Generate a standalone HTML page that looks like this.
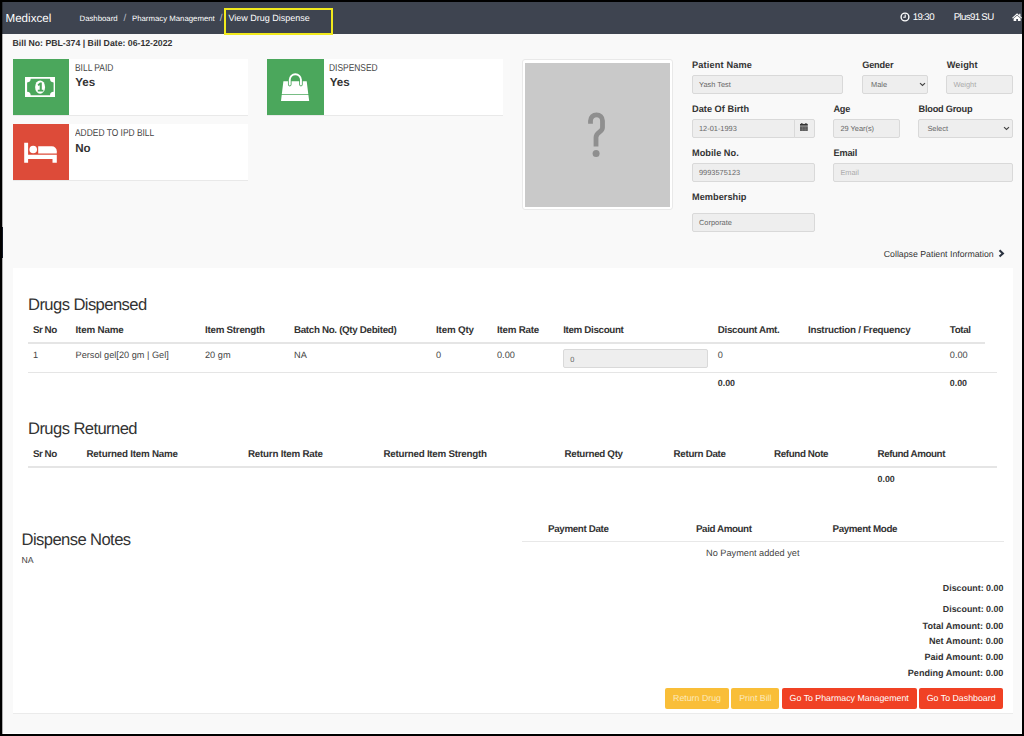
<!DOCTYPE html>
<html>
<head>
<meta charset="utf-8">
<title>View Drug Dispense</title>
<style>
*{box-sizing:border-box;margin:0;padding:0}
html,body{width:1024px;height:736px;overflow:hidden;background:#000}
body{font-family:"Liberation Sans",sans-serif;color:#333;position:relative;text-rendering:geometricPrecision}
.abs,.t,.b,.lbl,.inp,.th,.td{position:absolute;white-space:nowrap}
#page{position:absolute;left:0;top:0;width:1024px;height:736px;background:#f9f9f9;overflow:hidden}
#frame{position:absolute;left:0;top:0;width:1024px;height:736px;box-shadow:inset 0 0 0 2px #000;pointer-events:none;z-index:50}
#nav{position:absolute;left:0;top:0;width:1024px;height:33.800px;background:#3e4450}
#nav .t{color:#fff}
.card{position:absolute;height:56px;background:#fff;box-shadow:0 1px 0 #e9e9e9}
.card .ic{position:absolute;left:0;top:0;width:56px;height:56px}
.green{background:#4ba75c}.red{background:#dd4b39}
.card .ct{position:absolute;left:62.3px;top:4.300px;font-size:10px;line-height:12px;color:#444;transform:scaleX(.842);transform-origin:0 50%}
.card .cv{position:absolute;left:62.5px;top:17.500px;font-size:11.6px;font-weight:700;color:#333}
.lbl{font-weight:700;font-size:9.2px;transform:scaleY(1.03);transform-origin:0 50%;color:#333;line-height:12px}
.inp{height:18.5px;background:#eee;border:1px solid #d9d9d9;border-radius:2px;font-size:7.4px;color:#666;line-height:18px;padding-left:6px}
.ph{color:#aaa}
.panel{position:absolute;background:#fff}
.h{position:absolute;font-size:16.600px;letter-spacing:-.58px;color:#333;white-space:nowrap;line-height:20px}
.th{font-weight:700;font-size:9.8px;letter-spacing:-.3px;color:#333;line-height:12px}
.td{font-size:9.2px;color:#444;line-height:12px}
.b{font-weight:700;font-size:8.85px;color:#333;line-height:12px}
.hr{position:absolute;background:#e5e5e5}
.btn{position:absolute;top:687px;height:21px;border-radius:2px;color:#fff;font-size:8.8px;line-height:21px;text-align:center;white-space:nowrap}
</style>
</head>
<body>
<div id="page">
  <div id="nav">
    <div class="t" style="left:5.5px;top:12px;font-size:11.6px;line-height:14px">Medixcel</div>
    <div class="t" style="left:79.5px;top:13.700px;font-size:7.8px;line-height:10px">Dashboard</div>
    <div class="t" style="left:123.5px;top:12.500px;font-size:10px;line-height:12px;color:#b9bdc6">/</div>
    <div class="t" style="left:132px;top:13.700px;font-size:7.8px;line-height:10px">Pharmacy Management</div>
    <div class="t" style="left:219.800px;top:12.500px;font-size:10px;line-height:12px;color:#b9bdc6">/</div>
    <div class="t" style="left:228.5px;top:11.600px;font-size:9px;line-height:12px">View Drug Dispense</div>
    <svg class="abs" style="left:900.300px;top:12px" width="10" height="10" viewBox="0 0 10 10"><circle cx="5" cy="5" r="3.9" fill="none" stroke="#fff" stroke-width="1.4"/><path d="M5.2 2.6V5.3H3.2" fill="none" stroke="#fff" stroke-width="1.1"/></svg>
    <div class="t" style="left:912.700px;top:12px;font-size:9.700px;line-height:12px;letter-spacing:-.6px">19:30</div>
    <div class="t" style="left:953.8px;top:12px;font-size:9.700px;line-height:12px;letter-spacing:-.68px">Plus91 SU</div>
    <svg class="abs" style="left:1012.200px;top:12.900px" width="10.200" height="8.300" viewBox="0 0 12 9" preserveAspectRatio="none"><path d="M6 0.3L0.2 5.2l.7.8L6 1.8l5.1 4.2.7-.8L9.9 3.5V.9H8.5v1.5z M6 2.6L1.9 6v3h3.1V6.4h2V9h3.1V6z" fill="#fff"/></svg>
  </div>
  <div class="abs" style="left:224px;top:8px;width:108.5px;height:26.5px;border:2px solid #f2ea1d;z-index:5"></div>
  <div class="abs" style="left:2px;top:227px;width:1px;height:31px;background:#1b2333"></div>
  <div class="abs" style="left:12.5px;top:37.5px;font-size:8.72px;font-weight:700;line-height:11px;color:#333">Bill No: PBL-374 | Bill Date: 06-12-2022</div>
  <div class="card" style="left:12.7px;top:58.6px;width:235.5px">
    <div class="ic green"></div><div class="ct">BILL PAID</div><div class="cv">Yes</div>
  </div>
  <svg class="abs" style="left:25.2px;top:77.1px" width="30.3" height="20.2" viewBox="0 0 30.3 20.2">
    <rect width="30.3" height="20.2" fill="#fff"/>
    <path d="M5.700 1.800H25A3.600 3.600 0 0 0 28.600 5.400V14.700A3.600 3.600 0 0 0 25 18.300H5.700A3.600 3.600 0 0 0 2.100 14.700V5.400A3.600 3.600 0 0 0 5.700 1.800Z" fill="#4ba75c"/>
    <ellipse cx="15.1" cy="10.1" rx="5" ry="6.7" fill="#fff"/>
    <path d="M12.600 7.500l2.400-2h1.800v7.200h1.600v1.700h-5.600v-1.700h1.900V8.200l-1.200.9z" fill="#4ba75c"/>
  </svg>
  <div class="card" style="left:267.2px;top:58.6px;width:235.8px">
    <div class="ic green" style="width:56.500px"></div><div class="ct">DISPENSED</div><div class="cv">Yes</div>
  </div>
  <svg class="abs" style="left:280px;top:72px" width="30" height="30" viewBox="0 0 30 30">
    <path d="M3.4 9.3H26.7L28.3 22.2H1.8Z M1.7 22.95H28.4L29.2 29.1H1Z" fill="#fff"/>
    <path d="M9.75 12.6V7.85A5.6 5.6 0 0 1 20.95 7.85V12.6" fill="none" stroke="#4ba75c" stroke-width="3.6" stroke-linecap="round"/>
    <path d="M9.75 12.6V7.85A5.6 5.6 0 0 1 20.95 7.85V12.6" fill="none" stroke="#fff" stroke-width="1.9" stroke-linecap="round"/>
  </svg>
  <div class="card" style="left:12.7px;top:124.200px;width:235.5px">
    <div class="ic red"></div><div class="ct">ADDED TO IPD BILL</div><div class="cv">No</div>
  </div>
  <svg class="abs" style="left:24px;top:142px" width="33" height="21" viewBox="0 0 33 21">
    <path d="M.2.7h3.9v12h28.7v8h-4.3v-3.8H4.1v3.8H.2z" fill="#fff"/>
    <circle cx="9.2" cy="7.5" r="3.8" fill="#fff"/>
    <path d="M14.2 4.3H27.8A5 5 0 0 1 32.8 9.3V11.4H14.2Z" fill="#fff"/>
  </svg>
  <div class="abs" style="left:521.800px;top:59.3px;width:150.900px;height:151px;background:#fff;border:1px solid #e9e9e9;border-radius:3px"></div>
  <div class="abs" style="left:525.2px;top:62.5px;width:144.8px;height:144.8px;background:#c9c9c9"></div>
  <svg class="abs" style="left:586px;top:112px" width="22" height="48" viewBox="0 0 22 48">
    <path d="M4.5 11.800V8.800A6 6 0 0 1 16.500 8.800V15.500C16.500 20.500 10 19.500 10 25.500V34.400" fill="none" stroke="#8f8f8f" stroke-width="4.800"/>
    <circle cx="10.100" cy="41.500" r="3.500" fill="#8f8f8f"/>
  </svg>
  <div class="lbl" style="left:692px;top:58.9px;letter-spacing:0.16px">Patient Name</div>
  <div class="inp" style="left:692px;top:75.2px;width:151px">Yash Test</div>
  <div class="lbl" style="left:862.2px;top:58.9px;letter-spacing:-0.18px">Gender</div>
  <div class="inp" style="left:862.2px;top:75.2px;width:65.5px;padding-left:7.800px">Male</div>
  <svg class="abs" style="left:919px;top:82px" width="7" height="5" viewBox="0 0 7 5"><path d="M1 1.100L3.500 3.500 6 1.100" fill="none" stroke="#444" stroke-width="1.150"/></svg>
  <div class="lbl" style="left:946.8px;top:58.9px;letter-spacing:0.06px">Weight</div>
  <div class="inp ph" style="left:946.4px;top:75.2px;width:66.600px">Weight</div>

  <div class="lbl" style="left:692px;top:102.7px;letter-spacing:0.03px">Date Of Birth</div>
  <div class="inp" style="left:692px;top:119.2px;width:102.5px;border-radius:2px 0 0 2px">12-01-1993</div>
  <div class="inp" style="left:793.5px;top:119.2px;width:21px;border-radius:0 2px 2px 0;padding:0"></div>
  <svg class="abs" style="left:799.900px;top:123px" width="7.8" height="7.9" viewBox="0 0 7.8 7.9"><path d="M0 .9h7.800v1.800H0z" fill="#333"/><path d="M1.300 0h1.100v1.500H1.300zM5.400 0h1.100v1.500H5.400z" fill="#333"/><path d="M0 3.300h7.800v4.600H0z" fill="#4e4e4e"/><path d="M2.600 3.300v4.600M5.200 3.300v4.600M0 4.850h7.800M0 6.350h7.800" stroke="#8a8a8a" stroke-width=".4"/></svg>
  <div class="lbl" style="left:833.5px;top:102.7px;letter-spacing:-0.28px">Age</div>
  <div class="inp" style="left:833.4px;top:119.2px;width:66.400px">29 Year(s)</div>
  <div class="lbl" style="left:918.5px;top:102.7px;letter-spacing:-0.21px">Blood Group</div>
  <div class="inp" style="left:918.4px;top:119.2px;width:94.600px;padding-left:8px">Select</div>
  <svg class="abs" style="left:1003.300px;top:126px" width="7" height="5" viewBox="0 0 7 5"><path d="M1 1.100L3.500 3.500 6 1.100" fill="none" stroke="#444" stroke-width="1.150"/></svg>

  <div class="lbl" style="left:692px;top:146.7px;letter-spacing:0.03px">Mobile No.</div>
  <div class="inp" style="left:692px;top:163px;width:122.5px">9993575123</div>
  <div class="lbl" style="left:833.5px;top:146.7px;letter-spacing:-0.19px">Email</div>
  <div class="inp ph" style="left:833.4px;top:163px;width:179.600px">Email</div>

  <div class="lbl" style="left:692px;top:190.5px;letter-spacing:0.04px">Membership</div>
  <div class="inp" style="left:692px;top:213px;width:122.5px">Corporate</div>

  <div class="abs" style="left:883.800px;top:248.500px;font-size:8.76px;line-height:11px;color:#333">Collapse Patient Information</div>
  <svg class="abs" style="left:997.600px;top:249.200px" width="7" height="9" viewBox="0 0 7 9"><path d="M1.500 1.200L4.900 4.400 1.500 7.600" fill="none" stroke="#2b3340" stroke-width="2.100"/></svg>
  <div class="panel" style="left:13px;top:268px;width:1000px;height:445px;box-shadow:0 1px 0 #ebebeb"></div>
  <div class="h" style="left:28px;top:294.9px">Drugs Dispensed</div>
  <div class="th" style="left:33px;top:325.4px;letter-spacing:-0.5px">Sr No</div>
  <div class="th" style="left:75.5px;top:325.4px;letter-spacing:-0.16px">Item Name</div>
  <div class="th" style="left:205px;top:325.4px;letter-spacing:-0.26px">Item Strength</div>
  <div class="th" style="left:294px;top:325.4px;letter-spacing:-0.33px">Batch No. (Qty Debited)</div>
  <div class="th" style="left:436px;top:325.4px;letter-spacing:-0.17px">Item Qty</div>
  <div class="th" style="left:497px;top:325.4px;letter-spacing:-0.23px">Item Rate</div>
  <div class="th" style="left:563.2px;top:325.4px;letter-spacing:-0.34px">Item Discount</div>
  <div class="th" style="left:717.8px;top:325.4px;letter-spacing:-0.34px">Discount Amt.</div>
  <div class="th" style="left:808px;top:325.4px;letter-spacing:-0.26px">Instruction / Frequency</div>
  <div class="th" style="left:949.8px;top:325.4px;letter-spacing:-0.36px">Total</div>
  <div class="hr" style="left:28px;top:341.500px;width:956.500px;height:2px"></div>
  <div class="td" style="left:33px;top:348.5px">1</div>
  <div class="td" style="left:75.5px;top:348.5px">Persol gel[20 gm | Gel]</div>
  <div class="td" style="left:205px;top:348.5px">20 gm</div>
  <div class="td" style="left:294px;top:348.5px">NA</div>
  <div class="td" style="left:436px;top:348.5px">0</div>
  <div class="td" style="left:497px;top:348.5px">0.00</div>
  <div class="td" style="left:717.8px;top:348.5px">0</div>
  <div class="td" style="left:949.8px;top:348.5px">0.00</div>
  <div class="inp" style="left:563.2px;top:348.600px;width:144.500px;height:19px;line-height:19px">0</div>
  <div class="hr" style="left:28px;top:372px;width:969px;height:1px"></div>
  <div class="b" style="left:717.8px;top:377.3px">0.00</div>
  <div class="b" style="left:949.8px;top:377.3px">0.00</div>
  <div class="h" style="left:28px;top:419.0px">Drugs Returned</div>
  <div class="th" style="left:33px;top:448.9px;letter-spacing:-0.5px">Sr No</div>
  <div class="th" style="left:86.5px;top:448.9px;letter-spacing:-0.22px">Returned Item Name</div>
  <div class="th" style="left:248px;top:448.9px;letter-spacing:-0.23px">Return Item Rate</div>
  <div class="th" style="left:383.5px;top:448.9px;letter-spacing:-0.26px">Returned Item Strength</div>
  <div class="th" style="left:564.5px;top:448.9px;letter-spacing:-0.32px">Returned Qty</div>
  <div class="th" style="left:673.5px;top:448.9px;letter-spacing:-0.3px">Return Date</div>
  <div class="th" style="left:774px;top:448.9px;letter-spacing:-0.37px">Refund Note</div>
  <div class="th" style="left:877.5px;top:448.9px;letter-spacing:-0.43px">Refund Amount</div>
  <div class="hr" style="left:28px;top:465.500px;width:969px;height:2px"></div>
  <div class="b" style="left:877.5px;top:472.5px">0.00</div>
  <div class="h" style="left:21.500px;top:530.1px">Dispense Notes</div>
  <div class="td" style="left:21.500px;top:553.6px;font-size:8.700px">NA</div>
  <div class="th" style="left:548px;top:524.4px;letter-spacing:-0.35px">Payment Date</div>
  <div class="th" style="left:696px;top:524.4px;letter-spacing:-0.41px">Paid Amount</div>
  <div class="th" style="left:832.5px;top:524.4px;letter-spacing:-0.38px">Payment Mode</div>
  <div class="hr" style="left:522px;top:541px;width:481.500px;height:1px;background:#e8e8e8"></div>
  <div class="td" style="left:706px;top:547.0px">No Payment added yet</div>
  <div class="b" style="right:20.7px;top:581.6px">Discount: 0.00</div>
  <div class="b" style="right:20.7px;top:603.4px">Discount: 0.00</div>
  <div class="b" style="right:20.7px;top:619.5px;font-size:9.08px">Total Amount: 0.00</div>
  <div class="b" style="right:20.7px;top:635.3px;font-size:9.08px">Net Amount: 0.00</div>
  <div class="b" style="right:20.7px;top:651.4px;font-size:9.08px">Paid Amount: 0.00</div>
  <div class="b" style="right:20.7px;top:667.2px;font-size:9.08px">Pending Amount: 0.00</div>
  <div class="btn" style="left:665.1px;top:688.300px;width:63.8px;background:#f9be38;color:#fce9bd">Return Drug</div>
  <div class="btn" style="left:731.300px;top:688.300px;width:48.200px;background:#f9be38;color:#fce9bd">Print Bill</div>
  <div class="btn" style="left:781.7px;top:688.300px;width:135.0px;background:#f04124;color:#fff">Go To Pharmacy Management</div>
  <div class="btn" style="left:919px;top:688.300px;width:84.3px;background:#f04124;color:#fff">Go To Dashboard</div>
  <div class="abs" style="left:2px;top:2px;width:1px;height:732px;background:rgba(0,0,0,.3);z-index:49"></div>
  <div class="abs" style="left:3px;top:732.500px;width:1019px;height:1.500px;background:#fff;opacity:.8"></div>
  <div id="frame"></div>
</div>
</body>
</html>
